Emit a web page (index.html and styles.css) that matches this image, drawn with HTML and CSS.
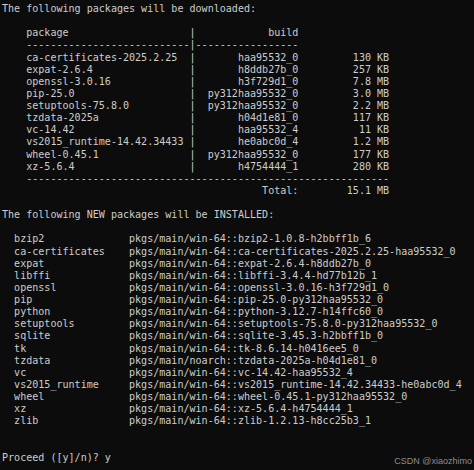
FILE: index.html
```html
<!DOCTYPE html>
<html>
<head>
<meta charset="utf-8">
<link rel="stylesheet" href="styles.css">
</head>
<body>
<main class="terminal">
<pre class="output">The following packages will be downloaded:

    package                    |            build
    ---------------------------|-----------------
    ca-certificates-2025.2.25  |       haa95532_0         130 KB
    expat-2.6.4                |       h8ddb27b_0         257 KB
    openssl-3.0.16             |       h3f729d1_0         7.8 MB
    pip-25.0                   |  py312haa95532_0         3.0 MB
    setuptools-75.8.0          |  py312haa95532_0         2.2 MB
    tzdata-2025a               |       h04d1e81_0         117 KB
    vc-14.42                   |       haa95532_4          11 KB
    vs2015_runtime-14.42.34433 |       he0abc0d_4         1.2 MB
    wheel-0.45.1               |  py312haa95532_0         177 KB
    xz-5.6.4                   |       h4754444_1         280 KB
    ------------------------------------------------------------
                                           Total:        15.1 MB

The following NEW packages will be INSTALLED:

  bzip2              pkgs/main/win-64::bzip2-1.0.8-h2bbff1b_6
  ca-certificates    pkgs/main/win-64::ca-certificates-2025.2.25-haa95532_0
  expat              pkgs/main/win-64::expat-2.6.4-h8ddb27b_0
  libffi             pkgs/main/win-64::libffi-3.4.4-hd77b12b_1
  openssl            pkgs/main/win-64::openssl-3.0.16-h3f729d1_0
  pip                pkgs/main/win-64::pip-25.0-py312haa95532_0
  python             pkgs/main/win-64::python-3.12.7-h14ffc60_0
  setuptools         pkgs/main/win-64::setuptools-75.8.0-py312haa95532_0
  sqlite             pkgs/main/win-64::sqlite-3.45.3-h2bbff1b_0
  tk                 pkgs/main/win-64::tk-8.6.14-h0416ee5_0
  tzdata             pkgs/main/noarch::tzdata-2025a-h04d1e81_0
  vc                 pkgs/main/win-64::vc-14.42-haa95532_4
  vs2015_runtime     pkgs/main/win-64::vs2015_runtime-14.42.34433-he0abc0d_4
  wheel              pkgs/main/win-64::wheel-0.45.1-py312haa95532_0
  xz                 pkgs/main/win-64::xz-5.6.4-h4754444_1
  zlib               pkgs/main/win-64::zlib-1.2.13-h8cc25b3_1</pre>
<div class="footer">
<span class="prompt">Proceed ([y]/n)? y</span>
<span class="watermark">CSDN @xiaozhimo</span>
</div>
</main>
</body>
</html>
```

FILE: styles.css
```css
html, body {
  margin: 0;
  padding: 0;
  background: #0c0c0c;
}

.terminal {
  width: 474px;
  height: 470px;
  overflow: hidden;
  background: #0c0c0c;
  padding: 3px 0 0 2px;
  box-sizing: border-box;
}

.output,
.prompt {
  margin: 0;
  font-family: "DejaVu Sans Mono", "Liberation Mono", monospace;
  font-size: 10.05px;
  line-height: 12.13px;
  color: #cccccc;
  white-space: pre;
}

.footer {
  display: flex;
  justify-content: space-between;
  align-items: flex-start;
  margin-top: 24.26px;
  padding-right: 2px;
}

.watermark {
  padding-top: 4px;
  font-family: "Liberation Sans", Arial, sans-serif;
  font-size: 9px;
  line-height: 10px;
  color: #8c8c8c;
}
```
